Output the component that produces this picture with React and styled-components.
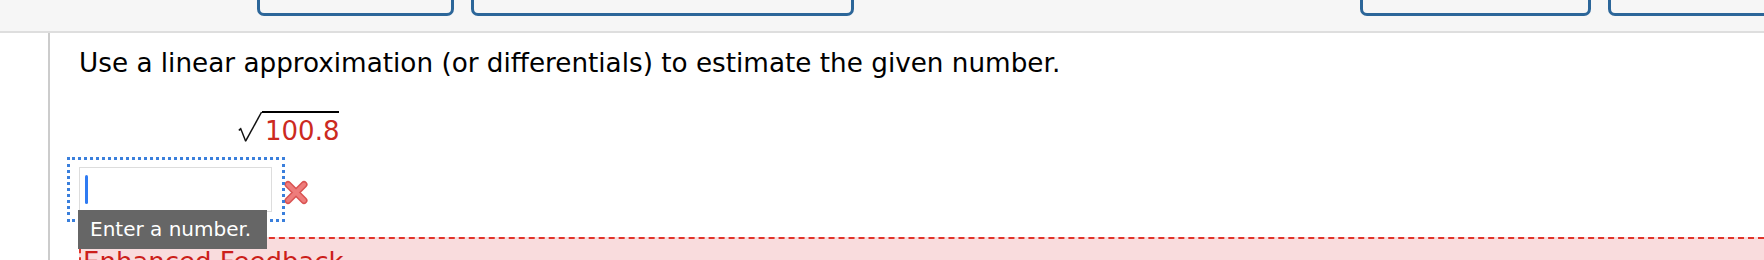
import React from 'react'
import styled, { createGlobalStyle } from 'styled-components'

const GlobalStyle = createGlobalStyle`
        html, body {
                margin: 0;
                padding: 0;
                background: #ffffff;
                font-family: "DejaVu Sans", Verdana, sans-serif;
                color: #000;
                overflow: hidden;
        }
`;

const Toolbar = styled.div`
        height: 33px;
        background: #f6f6f6;
        border-bottom: 2px solid #dedede;
        display: flex;
        align-items: flex-end;
        padding-bottom: 18px;
        box-sizing: border-box;
        overflow: hidden;
`;

const ToolGroup = styled.div`
        display: flex;
        gap: 17px;
        margin-left: ${props => props.offset}px;
        flex-shrink: 0;
`;

const ToolButton = styled.button`
        width: ${props => props.w}px;
        height: 40px;
        margin-bottom: -3px;
        border: 3px solid #2c6699;
        border-radius: 7px;
        background: #f6f6f6;
        flex-shrink: 0;
        padding: 0;
`;

const Page = styled.div`
        display: flex;
        height: 227px;
`;

const Gutter = styled.div`
        width: 48px;
        border-right: 2px solid #cccccc;
        flex-shrink: 0;
`;

const Content = styled.div`
        flex: 1;
        padding-left: 29px;
        min-width: 0;
`;

const Question = styled.p`
        margin: 12px 0 0;
        font-size: 26.25px;
        line-height: 37px;
`;

const MathRow = styled.div`
        margin-top: 29px;
        padding-left: 159px;
        display: flex;
        align-items: flex-start;
`;

const Radical = styled.svg`
        width: 24px;
        height: 32px;
        display: block;
        flex-shrink: 0;
`;

const Radicand = styled.span`
        border-top: 2px solid #000;
        padding: 1px 0 0 3px;
        font-size: 26px;
        line-height: 34px;
        color: #cc2a1f;
`;

const AnswerRow = styled.div`
        margin-top: 9px;
        margin-left: -12px;
        display: flex;
        align-items: center;
`;

const FocusRing = styled.div`
        position: relative;
        border: 3px dotted #3a7fdc;
        padding: 7px 10px 7px 9px;
`;

const Field = styled.div`
        width: 193px;
        height: 45px;
        box-sizing: border-box;
        border: 1px solid #dddddd;
        background: #fff;
        padding: 7px 0 0 5px;
`;

const Caret = styled.span`
        display: block;
        width: 3px;
        height: 29px;
        border-radius: 2px;
        background: #2f7bf2;
`;

const Tooltip = styled.div`
        position: absolute;
        left: 8px;
        top: 50px;
        width: 189px;
        height: 39px;
        box-sizing: border-box;
        padding-left: 12px;
        background: #666666;
        color: #ffffff;
        font-size: 20px;
        line-height: 39px;
        white-space: nowrap;
        z-index: 2;
`;

const WrongMark = styled.svg`
        width: 26px;
        height: 25px;
        margin-left: -2px;
        margin-top: 6px;
        flex-shrink: 0;
`;

const Feedback = styled.div`
        margin-top: 15px;
        border-top: 2px dashed #e2342a;
        border-left: 2px dashed #e2342a;
        background: #f9dcdd;
        padding: 5px 0 0 2px;
        color: #cc1f1a;
        font-size: 26px;
        line-height: 36px;
        height: 60px;
`;

const App = () => {
        return (
                <>
                        <GlobalStyle />
                        <Toolbar>
                                <ToolGroup offset={257}>
                                        <ToolButton w={197} />
                                        <ToolButton w={383} />
                                </ToolGroup>
                                <ToolGroup offset={506}>
                                        <ToolButton w={231} />
                                        <ToolButton w={240} />
                                </ToolGroup>
                        </Toolbar>
                        <Page>
                                <Gutter />
                                <Content>
                                        <Question>Use a linear approximation (or differentials) to estimate the given number.</Question>

                                        <MathRow>
                                                <Radical viewBox="0 0 24 32">
                                                        <path d="M0.5 18.5 L3 16.6 L8.2 29.5 L7.2 31 L2.6 19.2 L1 20 Z" fill="#111" />
                                                        <path d="M7.6 30.2 L23.6 1" stroke="#111" strokeWidth="1.5" fill="none" />
                                                </Radical>
                                                <Radicand>100.8</Radicand>
                                        </MathRow>

                                        <AnswerRow>
                                                <FocusRing>
                                                        <Field>
                                                                <Caret />
                                                        </Field>
                                                        <Tooltip>Enter a number.</Tooltip>
                                                </FocusRing>
                                                <WrongMark viewBox="0 0 26 25">
                                                        <path d="M5 4.5 L21 20.5 M21 4.5 L5 20.5" stroke="#d95352" strokeWidth="7" strokeLinecap="round" fill="none" />
                                                        <path d="M5 4.5 L21 20.5 M21 4.5 L5 20.5" stroke="#ee7c7b" strokeWidth="4" strokeLinecap="round" fill="none" />
                                                </WrongMark>
                                        </AnswerRow>

                                        <Feedback>Enhanced Feedback</Feedback>
                                </Content>
                        </Page>
                </>
        )
}

export default App
